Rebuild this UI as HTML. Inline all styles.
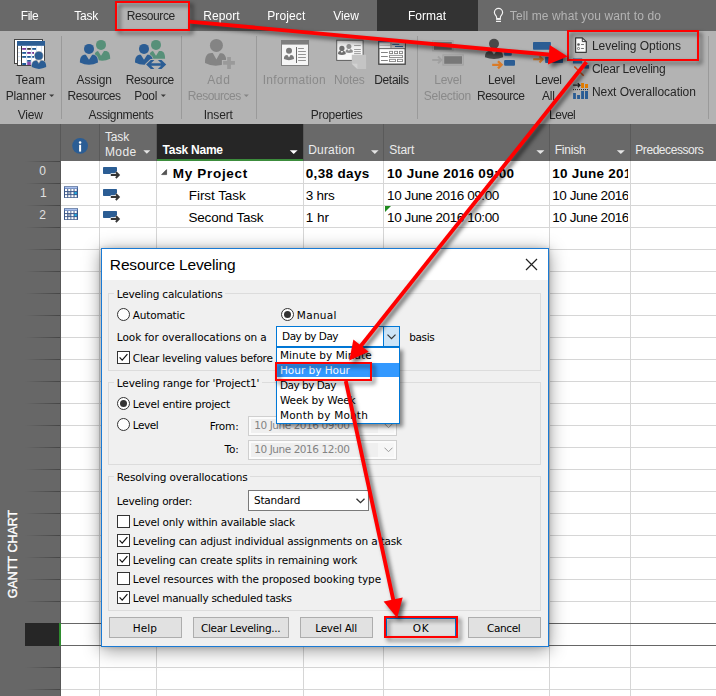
<!DOCTYPE html><html><head><meta charset="utf-8"><title>Resource Leveling</title><style>
html,body{margin:0;padding:0;}
body{width:716px;height:696px;position:relative;overflow:hidden;background:#fff;font-family:"Liberation Sans",sans-serif;}
.t{position:absolute;white-space:pre;}
.a{position:absolute;}
.sep{position:absolute;width:1px;top:36px;height:83px;background:#9a9a9a;}
.hl{position:absolute;left:61px;right:0;height:1px;background:#d6d6d6;}
.vl{position:absolute;top:161px;bottom:0;width:1px;background:#d6d6d6;}
.tick{position:absolute;left:25px;width:35px;height:1px;background:linear-gradient(90deg,rgba(70,70,70,0),rgba(70,70,70,1));}
.hsep{position:absolute;top:124px;height:37px;width:1px;background:#5a5a5a;}
.grp{position:absolute;border:1px solid #dcdcdc;box-sizing:border-box;}
.lbl{position:absolute;background:#f0f0f0;}
.cb{position:absolute;width:13px;height:13px;box-sizing:border-box;border:1px solid #333;background:#fff;}
.rb{position:absolute;width:13px;height:13px;box-sizing:border-box;border:1px solid #333;background:#fff;border-radius:50%;}
.rb.on:after{content:"";position:absolute;left:2px;top:2px;width:7px;height:7px;border-radius:50%;background:#333;}
.btn{position:absolute;box-sizing:border-box;border:1px solid #adadad;background:#e1e1e1;}
.combo{position:absolute;box-sizing:border-box;border:1px solid #7a7a7a;background:#fff;}
.combo.dis{border-color:#cfcfcf;background:#efefef;box-shadow:inset 0 0 0 2px #fbfbfb;}
.red{position:absolute;box-sizing:border-box;border:2px solid #f00;filter:drop-shadow(3px 3px 2px rgba(0,0,0,.6));}
</style></head><body>
<div class="a" style="left:0;top:0;width:716px;height:31px;background:#696969"></div>
<div class="a" style="left:377px;top:0;width:101px;height:31px;background:#333333"></div>
<div class="a" style="left:0;top:31px;width:716px;height:93px;background:#b3b3b3"></div>
<div class="a" style="left:116px;top:2px;width:73px;height:29px;background:#b3b3b3"></div>
<div class="sep" style="left:61px"></div>
<div class="sep" style="left:181px"></div>
<div class="sep" style="left:256px"></div>
<div class="sep" style="left:417px"></div>
<div class="sep" style="left:708px"></div>
<div class="a" style="left:0;top:124px;width:716px;height:37px;background:#696969"></div>
<div class="a" style="left:0;top:124px;width:60px;height:572px;background:#676767"></div>
<div class="a" style="left:60px;top:124px;width:1px;height:572px;background:#585858"></div>
<div class="a" style="left:157px;top:124px;width:146px;height:37px;background:#262626;border-bottom:2px solid #3c8c3c;box-sizing:border-box"></div>
<div class="hsep" style="left:99px"></div>
<div class="hsep" style="left:156px"></div>
<div class="hsep" style="left:303px"></div>
<div class="hsep" style="left:383px"></div>
<div class="hsep" style="left:549px"></div>
<div class="hsep" style="left:630px"></div>
<div class="tick" style="top:161px"></div>
<div class="hl" style="top:183px"></div>
<div class="tick" style="top:183px"></div>
<div class="hl" style="top:205px"></div>
<div class="tick" style="top:205px"></div>
<div class="hl" style="top:227px"></div>
<div class="tick" style="top:227px"></div>
<div class="hl" style="top:249px"></div>
<div class="tick" style="top:249px"></div>
<div class="hl" style="top:271px"></div>
<div class="tick" style="top:271px"></div>
<div class="hl" style="top:293px"></div>
<div class="tick" style="top:293px"></div>
<div class="hl" style="top:315px"></div>
<div class="tick" style="top:315px"></div>
<div class="hl" style="top:337px"></div>
<div class="tick" style="top:337px"></div>
<div class="hl" style="top:359px"></div>
<div class="tick" style="top:359px"></div>
<div class="hl" style="top:381px"></div>
<div class="tick" style="top:381px"></div>
<div class="hl" style="top:403px"></div>
<div class="tick" style="top:403px"></div>
<div class="hl" style="top:425px"></div>
<div class="tick" style="top:425px"></div>
<div class="hl" style="top:447px"></div>
<div class="tick" style="top:447px"></div>
<div class="hl" style="top:469px"></div>
<div class="tick" style="top:469px"></div>
<div class="hl" style="top:491px"></div>
<div class="tick" style="top:491px"></div>
<div class="hl" style="top:513px"></div>
<div class="tick" style="top:513px"></div>
<div class="hl" style="top:535px"></div>
<div class="tick" style="top:535px"></div>
<div class="hl" style="top:557px"></div>
<div class="tick" style="top:557px"></div>
<div class="hl" style="top:579px"></div>
<div class="tick" style="top:579px"></div>
<div class="hl" style="top:601px"></div>
<div class="tick" style="top:601px"></div>
<div class="hl" style="top:623px"></div>
<div class="tick" style="top:623px"></div>
<div class="hl" style="top:645px"></div>
<div class="tick" style="top:645px"></div>
<div class="hl" style="top:667px"></div>
<div class="tick" style="top:667px"></div>
<div class="hl" style="top:689px"></div>
<div class="tick" style="top:689px"></div>
<div class="vl" style="left:99px"></div>
<div class="vl" style="left:156px"></div>
<div class="vl" style="left:303px"></div>
<div class="vl" style="left:383px"></div>
<div class="vl" style="left:549px"></div>
<div class="vl" style="left:630px"></div>
<div class="a" style="left:25px;top:623px;width:34px;height:23px;background:#262626"></div>
<div class="a" style="left:59px;top:623px;width:2px;height:23px;background:#2e8b2e"></div>
<div class="a" style="left:61px;top:623px;width:655px;height:1px;background:#666"></div>
<div class="a" style="left:61px;top:645px;width:655px;height:1px;background:#666"></div>
<div class="a" style="left:13.3px;top:554px;width:0;height:0"><span class="t" style="left:-50px;top:-7px;width:100px;line-height:14px;text-align:center;transform:rotate(-90deg);color:#fff;font-size:12.5px;-webkit-text-stroke:0.35px #fff">GANTT CHART</span></div>
<div class="a" style="left:0;top:0;width:716px;height:124px;opacity:0.999">
<span class="t" style="left:20.78px;top:9px;font-size:12px;line-height:14px;color:#ffffff;letter-spacing:-0.461px;">File</span>
<span class="t" style="left:74.28px;top:9px;font-size:12px;line-height:14px;color:#ffffff;letter-spacing:-0.242px;">Task</span>
<span class="t" style="left:126.68px;top:9px;font-size:12px;line-height:14px;color:#262626;letter-spacing:-0.400px;">Resource</span>
<span class="t" style="left:203.28px;top:9px;font-size:12px;line-height:14px;color:#ffffff;letter-spacing:0.046px;">Report</span>
<span class="t" style="left:267.28px;top:9px;font-size:12px;line-height:14px;color:#ffffff;letter-spacing:0.100px;">Project</span>
<span class="t" style="left:333.28px;top:9px;font-size:12px;line-height:14px;color:#ffffff;letter-spacing:-0.079px;">View</span>
<span class="t" style="left:407.98px;top:9px;font-size:12px;line-height:14px;color:#ffffff;letter-spacing:0.029px;">Format</span>
<span class="t" style="left:509.78px;top:9px;font-size:12px;line-height:14px;color:#b4b4b4;letter-spacing:0.119px;">Tell me what you want to do</span>
<span class="t" style="left:15.58px;top:73px;font-size:12px;line-height:14px;color:#262626;letter-spacing:0.005px;">Team</span>
<span class="t" style="left:5.68px;top:89px;font-size:12px;line-height:14px;color:#262626;letter-spacing:-0.136px;">Planner</span>
<span class="t" style="left:17.68px;top:108px;font-size:12px;line-height:14px;color:#262626;letter-spacing:-0.179px;">View</span>
<span class="t" style="left:76.58px;top:73px;font-size:12px;line-height:14px;color:#262626;letter-spacing:-0.114px;">Assign</span>
<span class="t" style="left:67.58px;top:89px;font-size:12px;line-height:14px;color:#262626;letter-spacing:-0.500px;">Resources</span>
<span class="t" style="left:88.58px;top:108px;font-size:12px;line-height:14px;color:#262626;letter-spacing:-0.344px;">Assignments</span>
<span class="t" style="left:125.78px;top:73px;font-size:12px;line-height:14px;color:#262626;letter-spacing:-0.414px;">Resource</span>
<span class="t" style="left:134.18px;top:89px;font-size:12px;line-height:14px;color:#262626;letter-spacing:-0.257px;">Pool</span>
<span class="t" style="left:207.28px;top:73px;font-size:12px;line-height:14px;color:#8a8a8a;letter-spacing:0.600px;">Add</span>
<span class="t" style="left:187.78px;top:89px;font-size:12px;line-height:14px;color:#8a8a8a;letter-spacing:-0.487px;">Resources</span>
<span class="t" style="left:203.68px;top:108px;font-size:12px;line-height:14px;color:#262626;letter-spacing:-0.171px;">Insert</span>
<span class="t" style="left:262.68px;top:73px;font-size:12px;line-height:14px;color:#8a8a8a;letter-spacing:0.293px;">Information</span>
<span class="t" style="left:333.88px;top:73px;font-size:12px;line-height:14px;color:#8a8a8a;letter-spacing:-0.125px;">Notes</span>
<span class="t" style="left:374.18px;top:73px;font-size:12px;line-height:14px;color:#262626;letter-spacing:-0.321px;">Details</span>
<span class="t" style="left:310.78px;top:108px;font-size:12px;line-height:14px;color:#262626;letter-spacing:-0.294px;">Properties</span>
<span class="t" style="left:434.28px;top:73px;font-size:12px;line-height:14px;color:#8a8a8a;letter-spacing:-0.257px;">Level</span>
<span class="t" style="left:423.78px;top:89px;font-size:12px;line-height:14px;color:#8a8a8a;letter-spacing:-0.239px;">Selection</span>
<span class="t" style="left:488.08px;top:73px;font-size:12px;line-height:14px;color:#262626;letter-spacing:-0.382px;">Level</span>
<span class="t" style="left:477.03px;top:89px;font-size:12px;line-height:14px;color:#262626;letter-spacing:-0.500px;">Resource</span>
<span class="t" style="left:534.98px;top:73px;font-size:12px;line-height:14px;color:#262626;letter-spacing:-0.432px;">Level</span>
<span class="t" style="left:541.98px;top:89px;font-size:12px;line-height:14px;color:#262626;letter-spacing:-0.192px;">All</span>
<span class="t" style="left:549.07px;top:108px;font-size:12px;line-height:14px;color:#262626;letter-spacing:-0.500px;">Level</span>
<span class="t" style="left:591.88px;top:39px;font-size:12px;line-height:14px;color:#262626;letter-spacing:-0.022px;">Leveling Options</span>
<span class="t" style="left:591.88px;top:62px;font-size:12px;line-height:14px;color:#262626;letter-spacing:-0.220px;">Clear Leveling</span>
<span class="t" style="left:591.88px;top:85px;font-size:12px;line-height:14px;color:#262626;letter-spacing:-0.037px;">Next Overallocation</span>
</div>
<span class="t" style="left:104.98px;top:130px;font-size:12px;line-height:14px;color:#ececec;letter-spacing:-0.143px;">Task</span>
<span class="t" style="left:104.98px;top:145px;font-size:12px;line-height:14px;color:#ececec;letter-spacing:0.376px;">Mode</span>
<span class="t" style="left:162.58px;top:143px;font-size:12px;line-height:14px;color:#ffffff;letter-spacing:-0.253px;font-weight:bold;">Task Name</span>
<span class="t" style="left:308.28px;top:143px;font-size:12px;line-height:14px;color:#ececec;letter-spacing:0.157px;">Duration</span>
<span class="t" style="left:389.28px;top:143px;font-size:12px;line-height:14px;color:#ececec;letter-spacing:-0.096px;">Start</span>
<span class="t" style="left:554.78px;top:143px;font-size:12px;line-height:14px;color:#ececec;letter-spacing:-0.231px;">Finish</span>
<span class="t" style="left:635.28px;top:143px;font-size:12px;line-height:14px;color:#ececec;letter-spacing:-0.438px;">Predecessors</span>
<span class="t" style="left:39.28px;top:164px;font-size:12px;line-height:14px;color:#e0e0e0;letter-spacing:0.000px;">0</span>
<span class="t" style="left:39.88px;top:186px;font-size:12px;line-height:14px;color:#e0e0e0;letter-spacing:0.000px;">1</span>
<span class="t" style="left:39.28px;top:208px;font-size:12px;line-height:14px;color:#e0e0e0;letter-spacing:0.000px;">2</span>
<span class="t" style="left:172.69px;top:166px;font-size:13.5px;line-height:15px;color:#000000;letter-spacing:0.700px;font-weight:bold;">My Project</span>
<span class="t" style="left:188.79px;top:188px;font-size:13.5px;line-height:15px;color:#000000;letter-spacing:-0.060px;">First Task</span>
<span class="t" style="left:188.49px;top:210px;font-size:13.5px;line-height:15px;color:#000000;letter-spacing:-0.198px;">Second Task</span>
<span class="t" style="left:305.79px;top:166px;font-size:13.5px;line-height:15px;color:#000000;letter-spacing:0.335px;font-weight:bold;">0,38 days</span>
<span class="t" style="left:305.79px;top:188px;font-size:13.5px;line-height:15px;color:#000000;letter-spacing:-0.284px;">3 hrs</span>
<span class="t" style="left:305.79px;top:210px;font-size:13.5px;line-height:15px;color:#000000;letter-spacing:-0.029px;">1 hr</span>
<span class="t" style="left:387.09px;top:166px;font-size:13.5px;line-height:15px;color:#000000;letter-spacing:0.267px;font-weight:bold;">10 June 2016 09:00</span>
<span class="t" style="left:387.09px;top:188px;font-size:13.5px;line-height:15px;color:#000000;letter-spacing:-0.422px;">10 June 2016 09:00</span>
<span class="t" style="left:387.09px;top:210px;font-size:13.5px;line-height:15px;color:#000000;letter-spacing:-0.422px;">10 June 2016 10:00</span>
<div class="a" style="left:550px;top:161px;width:78px;height:70px;overflow:hidden">
<span class="t" style="left:2.19px;top:5px;font-size:13.5px;line-height:15px;color:#000000;letter-spacing:0.267px;font-weight:bold;">10 June 2016 09:00</span>
<span class="t" style="left:2.19px;top:27px;font-size:13.5px;line-height:15px;color:#000000;letter-spacing:-0.422px;">10 June 2016 09:00</span>
<span class="t" style="left:2.19px;top:49px;font-size:13.5px;line-height:15px;color:#000000;letter-spacing:-0.422px;">10 June 2016 10:00</span>
</div>
<svg class="a" style="left:0;top:0" width="716" height="130" viewBox="0 0 716 130">
<g stroke="#f2f2f2" stroke-width="1.2" fill="none"><path d="M496.6 18 V17.2 C496.6 15.6 494.4 14.9 494.4 12.5 A4.1 4.1 0 0 1 502.6 12.5 C502.6 14.9 500.4 15.6 500.4 17.2 V18"/><path d="M496 21.4 H501"/></g><rect x="496.1" y="18" width="4.8" height="1.9" fill="#f2f2f2"/>
<rect x="14.5" y="39.5" width="28" height="24" fill="#fff" stroke="#444" stroke-width="1"/>
<rect x="17.5" y="41.5" width="27" height="24" fill="#fff" stroke="#444" stroke-width="1"/>
<rect x="17" y="41" width="28" height="4.8" fill="#2b5d94"/>
<rect x="21" y="46" width="1" height="19" fill="#333"/>
<g fill="#c9dcf3"><rect x="26" y="46" width="0.7" height="19"/><rect x="31" y="46" width="0.7" height="19"/><rect x="36" y="46" width="0.7" height="19"/><rect x="41" y="46" width="0.7" height="19"/>
<rect x="18" y="48.3" width="2.6" height="0.8"/><rect x="18" y="52.3" width="2.6" height="0.8"/><rect x="18" y="56.3" width="2.6" height="0.8"/><rect x="18" y="60.3" width="2.6" height="0.8"/></g>
<g><rect x="22.2" y="48" width="3.8" height="1.8" fill="#7a3a9c"/><rect x="27.2" y="48" width="3.6" height="1.8" fill="#333"/><rect x="32.2" y="48" width="3.8" height="1.8" fill="#1f5a96"/>
<rect x="22.2" y="52" width="3.8" height="1.8" fill="#1f5a96"/><rect x="27.2" y="52" width="3.6" height="1.8" fill="#6a2a8c"/><rect x="32.2" y="52" width="1.8" height="1.8" fill="#6a2a8c"/>
<rect x="22.2" y="56" width="3.8" height="1.8" fill="#1f5a96"/><rect x="27.2" y="56" width="3.6" height="1.8" fill="#1f5a96"/><rect x="32.2" y="56" width="1.8" height="1.8" fill="#1f5a96"/>
<rect x="27.2" y="60" width="3.6" height="1.8" fill="#1f5a96"/><rect x="27.2" y="61.8" width="3.6" height="3.2" fill="#8a4aac"/><rect x="22.2" y="63" width="3.8" height="2" fill="#1f5a96"/></g>
<g stroke="#b3b3b3" stroke-width="1.6" stroke-linejoin="round"><circle cx="38.80" cy="55.80" r="4.00" fill="#2b5d94"/><path d="M31.80 67.12 C31.80 62.83 33.18 60.80 36.18 60.80 L36.80 60.80 L38.80 63.80 L40.80 60.80 L41.82 60.80 C44.82 60.80 46.20 62.83 46.20 67.12 Q39.00 70.68 31.80 67.12 Z" fill="#2b5d94"/></g>
<circle cx="38.80" cy="55.80" r="4.00" fill="#2b5d94"/><path d="M31.80 67.12 C31.80 62.83 33.18 60.80 36.18 60.80 L36.80 60.80 L38.80 63.80 L40.80 60.80 L41.82 60.80 C44.82 60.80 46.20 62.83 46.20 67.12 Q39.00 70.68 31.80 67.12 Z" fill="#2b5d94"/>
<circle cx="101.00" cy="44.90" r="5.00" fill="#579079"/><path d="M94.10 58.67 C94.10 53.52 95.65 51.10 98.99 51.10 L98.00 51.10 L101.00 55.70 L104.00 51.10 L105.31 51.10 C108.65 51.10 110.20 53.52 110.20 58.67 Q102.15 62.93 94.10 58.67 Z" fill="#579079"/>
<g stroke="#b3b3b3" stroke-width="1.6" stroke-linejoin="round"><circle cx="89.00" cy="48.90" r="5.00" fill="#2b5d94"/><path d="M79.90 62.60 C79.90 57.30 81.64 54.80 85.40 54.80 L85.80 54.80 L89.00 59.80 L92.20 54.80 L92.50 54.80 C96.26 54.80 98.00 57.30 98.00 62.60 Q88.95 67.00 79.90 62.60 Z" fill="#2b5d94"/></g>
<circle cx="89.00" cy="48.90" r="5.00" fill="#2b5d94"/><path d="M79.90 62.60 C79.90 57.30 81.64 54.80 85.40 54.80 L85.80 54.80 L89.00 59.80 L92.20 54.80 L92.50 54.80 C96.26 54.80 98.00 57.30 98.00 62.60 Q88.95 67.00 79.90 62.60 Z" fill="#2b5d94"/>
<clipPath id="cpg"><rect x="140" y="36" width="30" height="22.8"/></clipPath>
<g clip-path="url(#cpg)"><circle cx="156.00" cy="44.90" r="5.00" fill="#579079"/><path d="M149.10 58.67 C149.10 53.52 150.64 51.10 153.96 51.10 L153.00 51.10 L156.00 55.70 L159.00 51.10 L160.24 51.10 C163.56 51.10 165.10 53.52 165.10 58.67 Q157.10 62.93 149.10 58.67 Z" fill="#579079"/></g>
<g stroke="#b3b3b3" stroke-width="1.6" stroke-linejoin="round"><circle cx="144.00" cy="48.90" r="5.00" fill="#2b5d94"/><path d="M135.00 62.60 C135.00 57.30 136.73 54.80 140.47 54.80 L140.80 54.80 L144.00 59.80 L147.20 54.80 L147.53 54.80 C151.27 54.80 153.00 57.30 153.00 62.60 Q144.00 67.00 135.00 62.60 Z" fill="#2b5d94"/></g>
<circle cx="144.00" cy="48.90" r="5.00" fill="#2b5d94"/><path d="M135.00 62.60 C135.00 57.30 136.73 54.80 140.47 54.80 L140.80 54.80 L144.00 59.80 L147.20 54.80 L147.53 54.80 C151.27 54.80 153.00 57.30 153.00 62.60 Q144.00 67.00 135.00 62.60 Z" fill="#2b5d94"/>
<path d="M146.1 64.5 L150.8 60.1 H154.4 L151.1 63.2 H161.2 L157.9 60.1 H161.5 L166.2 64.5 L161.5 69 H157.9 L161.2 65.8 H151.1 L154.4 69 H150.8 Z" fill="#b3b3b3" stroke="#b3b3b3" stroke-width="2" stroke-linejoin="round"/>
<path d="M146.1 64.5 L150.8 60.1 H154.4 L151.1 63.2 H161.2 L157.9 60.1 H161.5 L166.2 64.5 L161.5 69 H157.9 L161.2 65.8 H151.1 L154.4 69 H150.8 Z" fill="#2b5d94"/>
<circle cx="216.40" cy="45.40" r="6.50" fill="#848484"/><path d="M205.00 63.01 C205.00 56.27 207.06 53.10 211.54 53.10 L212.80 53.10 L216.40 59.40 L220.00 53.10 L219.96 53.10 C224.44 53.10 226.50 56.27 226.50 63.01 Q215.75 68.59 205.00 63.01 Z" fill="#848484"/>
<path d="M227.2 57.1 H230.9 V61.1 H234.9 V64.8 H230.9 V68.9 H227.2 V64.8 H223.1 V61.1 H227.2 Z" fill="#b3b3b3" stroke="#b3b3b3" stroke-width="2.4"/>
<path d="M227.2 57.1 H230.9 V61.1 H234.9 V64.8 H230.9 V68.9 H227.2 V64.8 H223.1 V61.1 H227.2 Z" fill="#9a9a9a"/>
<rect x="281.5" y="40.5" width="27" height="25" fill="#f6f6f6" stroke="#808080"/>
<rect x="281" y="40" width="28" height="4.6" fill="#7e7e7e"/>
<circle cx="289.00" cy="50.80" r="3.00" fill="#7a7a7a"/><path d="M283.90 59.08 C283.90 56.38 284.87 55.10 286.97 55.10 L287.40 55.10 L289.00 57.50 L290.60 55.10 L290.93 55.10 C293.03 55.10 294.00 56.38 294.00 59.08 Q288.95 61.32 283.90 59.08 Z" fill="#7a7a7a"/>
<rect x="296" y="47" width="1" height="16" fill="#6a6a6a"/>
<g fill="#8a8a8a"><rect x="298.1" y="48" width="5.8" height="0.9"/><rect x="298.1" y="51.1" width="7.8" height="0.9"/><rect x="298.1" y="54" width="7.8" height="0.9"/><rect x="298.1" y="57" width="7.8" height="0.9"/><rect x="298.1" y="60" width="7.8" height="0.9"/></g>
<linearGradient id="ng" x1="0" y1="0" x2="0" y2="1"><stop offset="0" stop-color="#d8d8d8"/><stop offset="0.5" stop-color="#f6f6f6"/><stop offset="1" stop-color="#fafafa"/></linearGradient>
<rect x="336.7" y="40.2" width="26.4" height="20.2" fill="url(#ng)" stroke="#5e5e5e" stroke-width="1"/>
<circle cx="348.90" cy="46.40" r="2.50" fill="#8e8e8e"/><path d="M345.60 52.19 C345.60 50.22 346.30 49.30 347.82 49.30 L347.70 49.30 L348.90 51.10 L350.10 49.30 L350.68 49.30 C352.20 49.30 352.90 50.22 352.90 52.19 Q349.25 53.81 345.60 52.19 Z" fill="#8e8e8e"/>
<circle cx="341.90" cy="48.40" r="2.60" fill="#6e6e6e"/><path d="M338.00 54.12 C338.00 52.00 338.75 51.00 340.37 51.00 L340.60 51.00 L341.90 53.00 L343.20 51.00 L343.43 51.00 C345.05 51.00 345.80 52.00 345.80 54.12 Q341.90 55.88 338.00 54.12 Z" fill="#6e6e6e"/>
<g fill="#909090"><rect x="354.1" y="45" width="6.7" height="0.9"/><rect x="354.1" y="49.1" width="6.7" height="0.9"/><rect x="354.1" y="51.2" width="6.7" height="0.9"/><rect x="354.1" y="53.2" width="6.7" height="0.9"/></g>
<path d="M351.8 54.8 H366.1 V69 H357.4 L351.8 63.8 Z" fill="#c4c4c4"/><path d="M351.8 63.8 H357.4 V69 Z" fill="#d2d2d2"/>
<rect x="378.8" y="41.6" width="26.4" height="22.6" fill="#fff" stroke="#444" stroke-width="1.3"/>
<rect x="379.4" y="42.2" width="25.2" height="6" fill="#c6c6c6"/>
<rect x="378.2" y="41" width="12" height="1.2" fill="#2b5d94"/>
<rect x="379.8" y="43.2" width="10.4" height="1.7" fill="#f4f4f4"/><rect x="379.8" y="46" width="10.4" height="1.8" fill="#f4f4f4"/><rect x="390.6" y="42.2" width="0.8" height="6" fill="#888"/>
<rect x="392.2" y="43.9" width="7" height="1" fill="#2b5d94"/><rect x="395" y="46" width="8" height="1" fill="#2b5d94"/>
<rect x="378.8" y="48.2" width="26.4" height="0.9" fill="#555"/>
<g fill="#777"><rect x="381" y="52" width="6.8" height="0.9"/><rect x="381" y="56" width="6.8" height="0.9"/><rect x="381" y="60" width="6.8" height="0.9"/></g>
<g fill="#fff" stroke="#777" stroke-width="0.8"><rect x="389.6" y="51.3" width="3" height="2.3"/><rect x="394.6" y="51.3" width="3" height="2.3"/><rect x="399.5" y="51.3" width="3" height="2.3"/><rect x="389.6" y="55.3" width="12.9" height="2.3"/><rect x="389.6" y="59.3" width="5.9" height="2.3"/><rect x="397.5" y="59.3" width="5" height="2.3"/></g>
<rect x="432.7" y="40.7" width="20.4" height="10.2" fill="#b0b0b0" stroke="#a2a2a2"/><rect x="434" y="42" width="17.8" height="7.8" fill="#707070"/>
<rect x="442.9" y="54.9" width="20.4" height="10.2" fill="#b0b0b0" stroke="#a2a2a2"/><rect x="444.2" y="56.2" width="17.8" height="7.6" fill="#787878"/>
<path d="M432.20 59.90 H440.80 M438.00 56.50 L441.40 59.90 L438.00 63.30" stroke="#a0a0a0" stroke-width="2" fill="none" stroke-linejoin="miter"/>
<circle cx="494.00" cy="43.70" r="5.00" fill="#4a4a4a"/><path d="M485.00 57.20 C485.00 52.85 486.74 50.80 490.50 50.80 L491.40 50.80 L494.00 54.40 L496.60 50.80 L497.60 50.80 C501.36 50.80 503.10 52.85 503.10 57.20 Q494.05 60.80 485.00 57.20 Z" fill="#4a4a4a"/>
<rect x="504.1" y="50.8" width="7.7" height="5" rx="1" fill="#2b5d94"/><rect x="504.1" y="60.1" width="10.9" height="5.7" rx="1" fill="#2b5d94"/>
<path d="M492.20 64.80 H501.00 M498.00 61.20 L501.60 64.80 L498.00 68.40" stroke="#d97b29" stroke-width="2.3" fill="none" stroke-linejoin="miter"/>
<rect x="533" y="42" width="17.9" height="7.8" rx="0.8" fill="#2b5d94"/><rect x="545.1" y="56.8" width="17.9" height="6.2" rx="0.8" fill="#2b5d94"/>
<path d="M533.20 59.30 H542.00 M539.50 56.20 L542.60 59.30 L539.50 62.40" stroke="#cf7a2a" stroke-width="2.1" fill="none" stroke-linejoin="miter"/>
<path d="M575.6 37.9 H582.3 L586.3 41.6 V52.3 H575.6 Z" fill="#fafafa" stroke="#3a3a3a" stroke-width="1.2" stroke-linejoin="round"/><path d="M582.3 37.9 V41.6 H586.3" fill="none" stroke="#3a3a3a" stroke-width="1"/>
<circle cx="578.5" cy="44.5" r="1.3" fill="#555"/><circle cx="578.5" cy="48.5" r="1.1" fill="none" stroke="#555" stroke-width="0.8"/><rect x="581.1" y="44.1" width="2.8" height="0.9" fill="#666"/><rect x="581.1" y="48.1" width="2.8" height="0.9" fill="#666"/>
<rect x="572.9" y="58.5" width="9.3" height="5" fill="#2b5d94"/><rect x="584.2" y="65.1" width="4.8" height="3.5" fill="#2b5d94"/>
<path d="M574.3 66.5 L583.7 75.7 M583.2 66.5 L574.3 75.7" stroke="#c8501e" stroke-width="1.6" fill="none"/>
<path d="M573.10 85.20 H579.30 M577.80 83.10 L579.90 85.20 L577.80 87.30" stroke="#222" stroke-width="1.3" fill="none" stroke-linejoin="miter"/>
<rect x="581.1" y="83" width="2.9" height="5" fill="#e07b00"/><rect x="585" y="84" width="3" height="4" fill="#e07b00"/>
<path d="M573 89.6 H588.2" stroke="#222" stroke-width="1" stroke-dasharray="1 1" fill="none"/>
<g fill="#2b5d94"><rect x="573.1" y="93" width="2.8" height="6"/><rect x="577.1" y="95" width="2.9" height="4"/><rect x="581.1" y="91" width="2.9" height="8"/><rect x="585" y="91" width="3" height="8"/></g>
<path d="M49.2 94.4 H54.2 L51.7 97.1 Z" fill="#3a3a3a"/>
<path d="M160.8 94.4 H165.8 L163.3 97.1 Z" fill="#3a3a3a"/>
<path d="M243.8 94.4 H248.8 L246.3 97.1 Z" fill="#858585"/>
</svg>
<svg class="a" style="left:0;top:124px" width="716" height="110" viewBox="0 124 716 110">
<circle cx="80.1" cy="145.8" r="7.9" fill="#2b5d94"/><rect x="79.1" y="144.8" width="2" height="6.8" fill="#fff"/><circle cx="80.1" cy="142.4" r="1.25" fill="#fff"/>
<path d="M143.3 150.2 H150.3 L146.8 153.8 Z" fill="#e4e4e4"/>
<path d="M289.8 150.2 H297.6 L293.7 154.0 Z" fill="#fff"/>
<path d="M371.0 150.2 H378.6 L374.8 154.0 Z" fill="#e4e4e4"/>
<path d="M536.4 150.2 H544.4 L540.4 154.0 Z" fill="#e4e4e4"/>
<path d="M616.8 150.2 H624.8 L620.8 154.0 Z" fill="#e4e4e4"/>
<rect x="103" y="167.0" width="14" height="7" rx="0.7" fill="#2b5d94"/>
<path d="M110.6 175.0 H118.4 M115.6 172.2 L118.6 175.0 L115.6 177.8" stroke="#fff" stroke-width="3.6" fill="none"/>
<path d="M110.80 175.00 H118.20 M115.80 172.00 L118.80 175.00 L115.80 178.00" stroke="#353535" stroke-width="1.9" fill="none" stroke-linejoin="miter"/>
<rect x="103" y="189.0" width="14" height="7" rx="0.7" fill="#2b5d94"/>
<path d="M110.6 197.0 H118.4 M115.6 194.2 L118.6 197.0 L115.6 199.8" stroke="#fff" stroke-width="3.6" fill="none"/>
<path d="M110.80 197.00 H118.20 M115.80 194.00 L118.80 197.00 L115.80 200.00" stroke="#353535" stroke-width="1.9" fill="none" stroke-linejoin="miter"/>
<rect x="103" y="211.0" width="14" height="7" rx="0.7" fill="#2b5d94"/>
<path d="M110.6 219.0 H118.4 M115.6 216.2 L118.6 219.0 L115.6 221.8" stroke="#fff" stroke-width="3.6" fill="none"/>
<path d="M110.80 219.00 H118.20 M115.80 216.00 L118.80 219.00 L115.80 222.00" stroke="#353535" stroke-width="1.9" fill="none" stroke-linejoin="miter"/>
<rect x="64" y="186.3" width="14" height="11.6" fill="#3a5688"/>
<rect x="64.7" y="186.9" width="12.6" height="1.7" fill="#a9c0ee"/>
<rect x="65.0" y="189.0" width="2.25" height="2.1" fill="#fff"/>
<rect x="68.2" y="189.0" width="2.25" height="2.1" fill="#fff"/>
<rect x="71.3" y="189.0" width="2.25" height="2.1" fill="#fff"/>
<rect x="74.5" y="189.0" width="2.25" height="2.1" fill="#fff"/>
<rect x="65.0" y="192.1" width="2.25" height="2.1" fill="#fff"/>
<rect x="68.2" y="192.1" width="2.25" height="2.1" fill="#aab4c4"/>
<rect x="71.3" y="192.1" width="2.25" height="2.1" fill="#fff"/>
<rect x="74.5" y="192.1" width="2.25" height="2.1" fill="#22b4ea"/>
<rect x="65.0" y="195.1" width="2.25" height="2.1" fill="#fff"/>
<rect x="68.2" y="195.1" width="2.25" height="2.1" fill="#fff"/>
<rect x="71.3" y="195.1" width="2.25" height="2.1" fill="#fff"/>
<rect x="74.5" y="195.1" width="2.25" height="2.1" fill="#fff"/>
<rect x="64" y="208.3" width="14" height="11.6" fill="#3a5688"/>
<rect x="64.7" y="208.9" width="12.6" height="1.7" fill="#a9c0ee"/>
<rect x="65.0" y="211.0" width="2.25" height="2.1" fill="#fff"/>
<rect x="68.2" y="211.0" width="2.25" height="2.1" fill="#fff"/>
<rect x="71.3" y="211.0" width="2.25" height="2.1" fill="#fff"/>
<rect x="74.5" y="211.0" width="2.25" height="2.1" fill="#fff"/>
<rect x="65.0" y="214.1" width="2.25" height="2.1" fill="#fff"/>
<rect x="68.2" y="214.1" width="2.25" height="2.1" fill="#aab4c4"/>
<rect x="71.3" y="214.1" width="2.25" height="2.1" fill="#fff"/>
<rect x="74.5" y="214.1" width="2.25" height="2.1" fill="#22b4ea"/>
<rect x="65.0" y="217.1" width="2.25" height="2.1" fill="#fff"/>
<rect x="68.2" y="217.1" width="2.25" height="2.1" fill="#fff"/>
<rect x="71.3" y="217.1" width="2.25" height="2.1" fill="#fff"/>
<rect x="74.5" y="217.1" width="2.25" height="2.1" fill="#fff"/>
<path d="M166.6 169.6 V174.6 H161.6 Z" fill="#555" stroke="#333" stroke-width="0.6"/>
<path d="M385 206 H391 L385 212 Z" fill="#1e8a1e"/>
</svg>
<div class="a" style="left:101px;top:248px;width:448px;height:399px;box-sizing:border-box;border:1px solid #1a7ad4;background:#f0f0f0;box-shadow:0 3px 17px rgba(0,0,0,.42), 0 0 5px rgba(0,0,0,.15)"></div>
<div class="a" style="left:102px;top:249px;width:446px;height:31px;background:#fff"></div>
<svg class="a" style="left:525px;top:258px" width="13" height="13" viewBox="0 0 13 13"><path d="M1 1 L12 12 M12 1 L1 12" stroke="#222" stroke-width="1.2" fill="none"/></svg>
<div class="grp" style="left:108px;top:293px;width:433px;height:78px"></div>
<div class="grp" style="left:108px;top:382px;width:433px;height:83px"></div>
<div class="grp" style="left:108px;top:476px;width:433px;height:135px"></div>
<div class="lbl" style="left:114px;top:288px;width:111px;height:12px"></div>
<div class="lbl" style="left:114px;top:377px;width:148px;height:12px"></div>
<div class="lbl" style="left:114px;top:471px;width:136px;height:12px"></div>
<div class="rb" style="left:117px;top:308px"></div>
<div class="rb on" style="left:281px;top:308px"></div>
<div class="rb on" style="left:117px;top:397px"></div>
<div class="rb" style="left:117px;top:418px"></div>
<div class="combo" style="left:276px;top:326px;width:124px;height:21px;border-color:#0078d7"></div>
<div class="a" style="left:383px;top:326px;width:17px;height:21px;box-sizing:border-box;border:1px solid #0078d7;background:#cce4f7"></div>
<svg class="a" style="left:387px;top:334px" width="9" height="6" viewBox="0 0 9 6"><path d="M0.5 0.7 L4.5 4.7 L8.5 0.7" stroke="#333" stroke-width="1.2" fill="none"/></svg>
<div class="combo dis" style="left:248px;top:416px;width:149px;height:20px"></div>
<div class="a" style="left:378px;top:419px;width:16px;height:14px;background:#f6f6f6"></div>
<svg class="a" style="left:384px;top:423px" width="9" height="6" viewBox="0 0 9 6"><path d="M0.5 0.7 L4.5 4.7 L8.5 0.7" stroke="#9a9a9a" stroke-width="1" fill="none"/></svg>
<div class="combo dis" style="left:248px;top:440px;width:149px;height:20px"></div>
<div class="a" style="left:378px;top:443px;width:16px;height:14px;background:#f6f6f6"></div>
<svg class="a" style="left:384px;top:447px" width="9" height="6" viewBox="0 0 9 6"><path d="M0.5 0.7 L4.5 4.7 L8.5 0.7" stroke="#9a9a9a" stroke-width="1" fill="none"/></svg>
<div class="combo" style="left:248px;top:490px;width:121px;height:21px"></div>
<svg class="a" style="left:356px;top:498px" width="9" height="6" viewBox="0 0 9 6"><path d="M0.5 0.7 L4.5 4.7 L8.5 0.7" stroke="#333" stroke-width="1.3" fill="none"/></svg>
<div class="cb" style="left:117px;top:351px"></div>
<svg class="a" style="left:117px;top:351px" width="13" height="13" viewBox="0 0 13 13"><path d="M2.6 6.4 L5.2 9.2 L10.4 3.2" stroke="#111" stroke-width="1.2" fill="none"/></svg>
<div class="cb" style="left:117px;top:515px"></div>
<div class="cb" style="left:117px;top:534px"></div>
<svg class="a" style="left:117px;top:534px" width="13" height="13" viewBox="0 0 13 13"><path d="M2.6 6.4 L5.2 9.2 L10.4 3.2" stroke="#111" stroke-width="1.2" fill="none"/></svg>
<div class="cb" style="left:117px;top:553px"></div>
<svg class="a" style="left:117px;top:553px" width="13" height="13" viewBox="0 0 13 13"><path d="M2.6 6.4 L5.2 9.2 L10.4 3.2" stroke="#111" stroke-width="1.2" fill="none"/></svg>
<div class="cb" style="left:117px;top:572px"></div>
<div class="cb" style="left:117px;top:591px"></div>
<svg class="a" style="left:117px;top:591px" width="13" height="13" viewBox="0 0 13 13"><path d="M2.6 6.4 L5.2 9.2 L10.4 3.2" stroke="#111" stroke-width="1.2" fill="none"/></svg>
<div class="btn" style="left:109px;top:617px;width:73px;height:21px"></div>
<div class="btn" style="left:193px;top:617px;width:96px;height:21px"></div>
<div class="btn" style="left:300px;top:617px;width:73px;height:21px"></div>
<div class="btn" style="left:385px;top:617px;width:72px;height:21px;border:2px solid #0078d7"></div>
<div class="btn" style="left:468px;top:617px;width:73px;height:21px"></div>
<span class="t" style="left:109.87px;top:256px;font-size:15.5px;line-height:17px;color:#000000;letter-spacing:-0.166px;">Resource Leveling</span>
<span class="t" style="left:116.87px;top:288px;font-size:10.5px;line-height:12px;color:#000000;letter-spacing:-0.202px;font-family:'DejaVu Sans', 'Liberation Sans', sans-serif;">Leveling calculations</span>
<span class="t" style="left:132.87px;top:309px;font-size:10.5px;line-height:12px;color:#000000;letter-spacing:-0.215px;font-family:'DejaVu Sans', 'Liberation Sans', sans-serif;">Automatic</span>
<span class="t" style="left:296.87px;top:309px;font-size:10.5px;line-height:12px;color:#000000;letter-spacing:0.277px;font-family:'DejaVu Sans', 'Liberation Sans', sans-serif;">Manual</span>
<span class="t" style="left:116.87px;top:331px;font-size:10.5px;line-height:12px;color:#000000;letter-spacing:-0.066px;font-family:'DejaVu Sans', 'Liberation Sans', sans-serif;">Look for overallocations on a</span>
<span class="t" style="left:282.07px;top:330px;font-size:10.5px;line-height:12px;color:#000000;letter-spacing:-0.500px;font-family:'DejaVu Sans', 'Liberation Sans', sans-serif;">Day by Day</span>
<span class="t" style="left:409.17px;top:331px;font-size:10.5px;line-height:12px;color:#000000;letter-spacing:-0.332px;font-family:'DejaVu Sans', 'Liberation Sans', sans-serif;">basis</span>
<div class="a" style="left:117px;top:349px;width:159px;height:18px;overflow:hidden">
<span class="t" style="left:15.87px;top:3px;font-size:10.5px;line-height:12px;color:#000000;letter-spacing:-0.244px;font-family:'DejaVu Sans', 'Liberation Sans', sans-serif;">Clear leveling values before</span>
</div>
<span class="t" style="left:116.87px;top:377px;font-size:10.5px;line-height:12px;color:#000000;letter-spacing:-0.167px;font-family:'DejaVu Sans', 'Liberation Sans', sans-serif;">Leveling range for 'Project1'</span>
<span class="t" style="left:132.87px;top:398px;font-size:10.5px;line-height:12px;color:#000000;letter-spacing:-0.231px;font-family:'DejaVu Sans', 'Liberation Sans', sans-serif;">Level entire project</span>
<span class="t" style="left:132.87px;top:419px;font-size:10.5px;line-height:12px;color:#000000;letter-spacing:-0.500px;font-family:'DejaVu Sans', 'Liberation Sans', sans-serif;">Level</span>
<span class="t" style="left:209.77px;top:420px;font-size:10.5px;line-height:12px;color:#000000;letter-spacing:-0.156px;font-family:'DejaVu Sans', 'Liberation Sans', sans-serif;">From:</span>
<span class="t" style="left:224.47px;top:443px;font-size:10.5px;line-height:12px;color:#000000;letter-spacing:-0.177px;font-family:'DejaVu Sans', 'Liberation Sans', sans-serif;">To:</span>
<span class="t" style="left:254.37px;top:419px;font-size:10.5px;line-height:12px;color:#838383;letter-spacing:-0.453px;font-family:'DejaVu Sans', 'Liberation Sans', sans-serif;">10 June 2016 09:00</span>
<span class="t" style="left:254.37px;top:443px;font-size:10.5px;line-height:12px;color:#838383;letter-spacing:-0.453px;font-family:'DejaVu Sans', 'Liberation Sans', sans-serif;">10 June 2016 12:00</span>
<span class="t" style="left:116.87px;top:471px;font-size:10.5px;line-height:12px;color:#000000;letter-spacing:-0.123px;font-family:'DejaVu Sans', 'Liberation Sans', sans-serif;">Resolving overallocations</span>
<span class="t" style="left:116.87px;top:495px;font-size:10.5px;line-height:12px;color:#000000;letter-spacing:-0.223px;font-family:'DejaVu Sans', 'Liberation Sans', sans-serif;">Leveling order:</span>
<span class="t" style="left:253.97px;top:494px;font-size:10.5px;line-height:12px;color:#000000;letter-spacing:-0.192px;font-family:'DejaVu Sans', 'Liberation Sans', sans-serif;">Standard</span>
<span class="t" style="left:132.87px;top:516px;font-size:10.5px;line-height:12px;color:#000000;letter-spacing:-0.221px;font-family:'DejaVu Sans', 'Liberation Sans', sans-serif;">Level only within available slack</span>
<span class="t" style="left:132.87px;top:535px;font-size:10.5px;line-height:12px;color:#000000;letter-spacing:-0.161px;font-family:'DejaVu Sans', 'Liberation Sans', sans-serif;">Leveling can adjust individual assignments on a task</span>
<span class="t" style="left:132.87px;top:554px;font-size:10.5px;line-height:12px;color:#000000;letter-spacing:-0.167px;font-family:'DejaVu Sans', 'Liberation Sans', sans-serif;">Leveling can create splits in remaining work</span>
<span class="t" style="left:132.87px;top:573px;font-size:10.5px;line-height:12px;color:#000000;letter-spacing:-0.090px;font-family:'DejaVu Sans', 'Liberation Sans', sans-serif;">Level resources with the proposed booking type</span>
<span class="t" style="left:132.87px;top:592px;font-size:10.5px;line-height:12px;color:#000000;letter-spacing:-0.288px;font-family:'DejaVu Sans', 'Liberation Sans', sans-serif;">Level manually scheduled tasks</span>
<span class="t" style="left:132.87px;top:622px;font-size:10.5px;line-height:12px;color:#000000;letter-spacing:0.029px;font-family:'DejaVu Sans', 'Liberation Sans', sans-serif;">Help</span>
<span class="t" style="left:200.97px;top:622px;font-size:10.5px;line-height:12px;color:#000000;letter-spacing:-0.320px;font-family:'DejaVu Sans', 'Liberation Sans', sans-serif;">Clear Leveling...</span>
<span class="t" style="left:315.27px;top:622px;font-size:10.5px;line-height:12px;color:#000000;letter-spacing:-0.280px;font-family:'DejaVu Sans', 'Liberation Sans', sans-serif;">Level All</span>
<span class="t" style="left:412.76px;top:622px;font-size:10.5px;line-height:12px;color:#000000;letter-spacing:0.700px;font-family:'DejaVu Sans', 'Liberation Sans', sans-serif;">OK</span>
<span class="t" style="left:486.97px;top:622px;font-size:10.5px;line-height:12px;color:#000000;letter-spacing:-0.368px;font-family:'DejaVu Sans', 'Liberation Sans', sans-serif;">Cancel</span>
<div class="a" style="left:276px;top:347px;width:124px;height:77px;box-sizing:border-box;border:1px solid #0078d7;background:#fff;box-shadow:3px 3px 4px rgba(0,0,0,.45)"></div>
<div class="a" style="left:277px;top:363px;width:122px;height:14px;background:#3399ff"></div>
<span class="t" style="left:279.97px;top:349px;font-size:10.5px;line-height:12px;color:#000000;letter-spacing:0.024px;font-family:'DejaVu Sans', 'Liberation Sans', sans-serif;">Minute by Minute</span>
<span class="t" style="left:279.97px;top:364px;font-size:10.5px;line-height:12px;color:#ffffff;letter-spacing:-0.018px;font-family:'DejaVu Sans', 'Liberation Sans', sans-serif;">Hour by Hour</span>
<span class="t" style="left:279.97px;top:379px;font-size:10.5px;line-height:12px;color:#000000;letter-spacing:-0.500px;font-family:'DejaVu Sans', 'Liberation Sans', sans-serif;">Day by Day</span>
<span class="t" style="left:279.97px;top:394px;font-size:10.5px;line-height:12px;color:#000000;letter-spacing:-0.123px;font-family:'DejaVu Sans', 'Liberation Sans', sans-serif;">Week by Week</span>
<span class="t" style="left:279.97px;top:409px;font-size:10.5px;line-height:12px;color:#000000;letter-spacing:0.190px;font-family:'DejaVu Sans', 'Liberation Sans', sans-serif;">Month by Month</span>
<div class="red" style="left:115px;top:1px;width:75px;height:30px"></div>
<div class="red" style="left:567px;top:30px;width:132px;height:31px"></div>
<div class="red" style="left:275px;top:362px;width:97px;height:19px"></div>
<div class="red" style="left:384px;top:616px;width:74px;height:22px"></div>
<svg class="a" style="left:0;top:0;filter:drop-shadow(3px 3px 2px rgba(0,0,0,.6))" width="716" height="696" viewBox="0 0 716 696">
<line x1="189.5" y1="21.6" x2="550.8" y2="54.8" stroke="#f00" stroke-width="3.9"/><polygon points="567.7,56.4 547.9,64.4 549.7,45.0" fill="#f00"/>
<line x1="586.4" y1="62.0" x2="359.8" y2="347.2" stroke="#f00" stroke-width="3.9"/><polygon points="349.2,360.5 353.4,339.6 368.7,351.7" fill="#f00"/>
<line x1="345.8" y1="381.0" x2="393.6" y2="601.4" stroke="#f00" stroke-width="3.9"/><polygon points="397.2,618.0 383.6,601.5 402.7,597.4" fill="#f00"/>
</svg>
</body></html>
